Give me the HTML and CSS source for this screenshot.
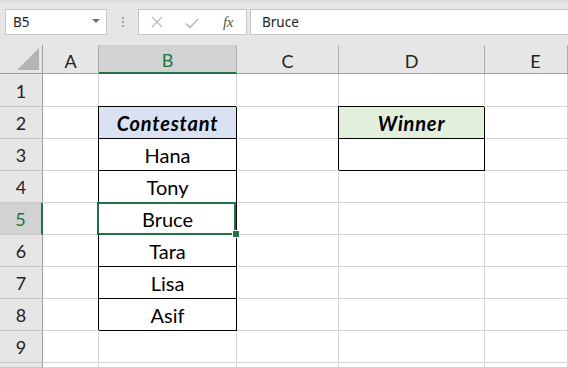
FILE: index.html
```html
<!DOCTYPE html>
<html lang="en">
<head>
    <meta charset="UTF-8">
    <meta name="viewport" content="width=device-width, initial-scale=1.0">
    <title>Contestants</title>
    <link rel="stylesheet" href="styles.css">
</head>
<body>
    <div class="formula-bar">
        <div class="name-box">
            <span>B5</span>
            <span class="caret"></span>
        </div>
        <div class="grip"><i></i><i></i><i></i></div>
        <div class="fx-buttons">
            <svg class="btn-cancel" width="12" height="12" viewBox="0 0 12 12">
                <path d="M1 1 L11 11 M11 1 L1 11" stroke="#bdbdbd" stroke-width="1.4" fill="none"/>
            </svg>
            <svg class="btn-enter" width="14" height="11" viewBox="0 0 14 11">
                <path d="M1 5.5 L5 9.5 L13 1" stroke="#bdbdbd" stroke-width="1.6" fill="none"/>
            </svg>
            <span class="fx">fx</span>
        </div>
        <div class="formula-input">Bruce</div>
    </div>

    <div class="sheet">
        <div class="cell head corner"><span class="tri"></span></div>
        <div class="cell head">A</div>
        <div class="cell head selected">B</div>
        <div class="cell head">C</div>
        <div class="cell head">D</div>
        <div class="cell head last">E</div>

        <div class="cell row-head">1</div>
        <div class="cell"></div><div class="cell"></div><div class="cell"></div><div class="cell"></div><div class="cell"></div>

        <div class="cell row-head">2</div>
        <div class="cell"></div>
        <div class="cell box title blue">Contestant</div>
        <div class="cell"></div>
        <div class="cell box title green">Winner</div>
        <div class="cell"></div>

        <div class="cell row-head">3</div>
        <div class="cell"></div>
        <div class="cell box">Hana</div>
        <div class="cell"></div>
        <div class="cell box"></div>
        <div class="cell"></div>

        <div class="cell row-head">4</div>
        <div class="cell"></div>
        <div class="cell box">Tony</div>
        <div class="cell"></div><div class="cell"></div><div class="cell"></div>

        <div class="cell row-head selected">5</div>
        <div class="cell"></div>
        <div class="cell box active">Bruce</div>
        <div class="cell"></div><div class="cell"></div><div class="cell"></div>

        <div class="cell row-head">6</div>
        <div class="cell"></div>
        <div class="cell box">Tara</div>
        <div class="cell"></div><div class="cell"></div><div class="cell"></div>

        <div class="cell row-head">7</div>
        <div class="cell"></div>
        <div class="cell box">Lisa</div>
        <div class="cell"></div><div class="cell"></div><div class="cell"></div>

        <div class="cell row-head">8</div>
        <div class="cell"></div>
        <div class="cell box">Asif</div>
        <div class="cell"></div><div class="cell"></div><div class="cell"></div>

        <div class="cell row-head">9</div>
        <div class="cell"></div><div class="cell"></div><div class="cell"></div><div class="cell"></div><div class="cell"></div>

        <div class="cell row-head"></div>
        <div class="cell"></div><div class="cell"></div><div class="cell"></div><div class="cell"></div><div class="cell"></div>
    </div>
</body>
</html>
```

FILE: styles.css
```css
* {
    box-sizing: border-box;
}

body {
    margin: 0;
    width: 568px;
    height: 368px;
    overflow: hidden;
    background-color: #e6e6e6;
    font-family: Lato, "Noto Sans", sans-serif;
}

.formula-bar {
    height: 45px;
    display: flex;
    align-items: flex-start;
    padding: 9px 0 0 5px;
    background: linear-gradient(#d9d9d9 0, #e6e6e6 4px);
    font-family: "Noto Sans", "Open Sans", sans-serif;
    font-size: 13.5px;
    color: #222;
}

.name-box {
    width: 102px;
    height: 26px;
    background-color: #fff;
    border: 1px solid #c6c6c6;
    display: flex;
    align-items: center;
    justify-content: space-between;
    padding: 0 6px 0 7px;
}

.caret {
    width: 0;
    height: 0;
    border-left: 4px solid transparent;
    border-right: 4px solid transparent;
    border-top: 4px solid #707070;
    margin-top: -2px;
}

.grip {
    width: 31px;
    height: 26px;
    display: flex;
    flex-direction: column;
    align-items: center;
    justify-content: center;
    gap: 2px;
}

.grip i {
    width: 2px;
    height: 2px;
    background-color: #a6a6a6;
}

.fx-buttons {
    width: 109px;
    height: 26px;
    background-color: #fff;
    border: 1px solid #c6c6c6;
    display: flex;
    align-items: center;
    padding-left: 12px;
}

.btn-cancel {
    margin-right: 22px;
}

.btn-enter {
    margin-right: 24px;
    margin-top: 2px;
}

.fx {
    font-family: "Liberation Serif", serif;
    font-style: italic;
    font-size: 15px;
    color: #555;
    letter-spacing: -0.5px;
}

.formula-input {
    flex: 1;
    height: 26px;
    margin-left: 3px;
    background-color: #fff;
    border: 1px solid #c6c6c6;
    border-right: none;
    display: flex;
    align-items: center;
    padding-left: 11px;
}

.sheet {
    display: grid;
    grid-template-columns: 43px 56px 138px 102px 146px 1fr;
    grid-template-rows: 29px 33px repeat(8, 32px) 5px;
    background-color: #fff;
}

.cell {
    border-right: 1px solid #d4d4d4;
    border-bottom: 1px solid #d4d4d4;
    display: flex;
    align-items: center;
    justify-content: center;
    font-size: 20px;
    color: #000;
    padding-top: 1px;
}

.head {
    background-color: #e6e6e6;
    border-right-color: #ababab;
    border-bottom-color: #9e9e9e;
    font-size: 18px;
    color: #222;
    padding-top: 3px;
}

.head.last {
    padding-left: 19px;
}

.head.selected {
    background-color: #d2d2d2;
    border-bottom: 2px solid #217346;
    color: #217346;
}

.corner {
    position: relative;
    border-right-color: #9e9e9e;
}

.tri {
    position: absolute;
    right: 3px;
    bottom: 3px;
    width: 22px;
    height: 22px;
    background-color: #b4b4b4;
    clip-path: polygon(100% 0, 100% 100%, 0 100%);
}

.row-head {
    background-color: #e6e6e6;
    border-right-color: #9e9e9e;
    border-bottom-color: #c8c8c8;
    font-size: 18px;
    color: #222;
}

.row-head.selected {
    background-color: #d2d2d2;
    border-right: 2px solid #217346;
    color: #217346;
}

.box {
    border-color: #000;
    box-shadow: -1px -1px 0 #000;
}

.title {
    font-weight: bold;
    font-style: italic;
    letter-spacing: 0.8px;
}

.blue {
    background-color: #d9e1f2;
}

.green {
    background-color: #e2efda;
}

.active {
    position: relative;
}

.active::after {
    content: "";
    position: absolute;
    top: -1px;
    left: -2px;
    right: 0;
    bottom: -1px;
    border: 2px solid #217346;
}

.active::before {
    content: "";
    position: absolute;
    right: -3px;
    bottom: -3px;
    width: 6px;
    height: 6px;
    background-color: #217346;
    outline: 1px solid #fff;
    z-index: 1;
}
```
